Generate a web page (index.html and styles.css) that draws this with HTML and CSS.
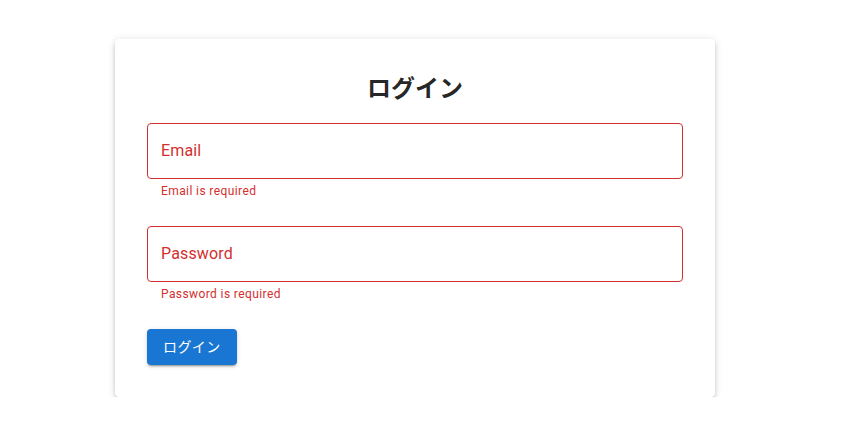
FILE: index.html
```html
<!DOCTYPE html>
<html lang="ja">
<head>
<meta charset="utf-8">
<title>ログイン</title>
<link rel="stylesheet" href="styles.css">
</head>
<body>
<div class="page">
  <form class="card">
    <h1 class="title">ログイン</h1>
    <div class="field">
      <div class="box"><span class="label">Email</span></div>
      <p class="helper">Email is required</p>
    </div>
    <div class="field">
      <div class="box"><span class="label">Password</span></div>
      <p class="helper">Password is required</p>
    </div>
    <button type="button" class="btn">ログイン</button>
  </form>
</div>
</body>
</html>
```

FILE: styles.css
```css
html, body {
  margin: 0;
  padding: 0;
  background: #ffffff;
}
body {
  font-family: Roboto, "Noto Sans CJK JP", sans-serif;
}
.page {
  padding-top: 39px;
  padding-left: 115px;
}
.card {
  width: 600px;
  box-sizing: border-box;
  padding: 32px;
  background: #fff;
  border-radius: 4px;
  box-shadow: 0px 3px 3px -2px rgba(0,0,0,0.2), 0px 3px 4px 0px rgba(0,0,0,0.14), 0px 1px 8px 0px rgba(0,0,0,0.12);
  display: flex;
  flex-direction: column;
  align-items: stretch;
}
.title {
  margin: 0 0 20px;
  text-align: center;
  font-family: "Noto Sans CJK JP", sans-serif;
  font-size: 24px;
  font-weight: 700;
  line-height: 32px;
  color: rgba(0,0,0,0.87);
}
.field {
  margin-bottom: 25px;
}
.box {
  height: 56px;
  box-sizing: border-box;
  border: 1px solid #d32f2f;
  border-radius: 4px;
  padding: 15px 13px;
}
.label {
  display: block;
  font-size: 16px;
  line-height: 23px;
  letter-spacing: 0.00938em;
  color: #d32f2f;
}
.helper {
  margin: 2px 14px 0;
  font-size: 12px;
  line-height: 20px;
  letter-spacing: 0.03333em;
  color: #d32f2f;
}
.btn {
  align-self: flex-start;
  height: 36px;
  padding: 6px 16px;
  border: none;
  border-radius: 4px;
  background: #1976d2;
  color: #fff;
  font-family: Roboto, "Noto Sans CJK JP", sans-serif;
  font-size: 14px;
  font-weight: 400;
  letter-spacing: 0.02857em;
  line-height: 24px;
  box-shadow: 0px 3px 1px -2px rgba(0,0,0,0.2), 0px 2px 2px 0px rgba(0,0,0,0.14), 0px 1px 5px 0px rgba(0,0,0,0.12);
  cursor: pointer;
}
```
